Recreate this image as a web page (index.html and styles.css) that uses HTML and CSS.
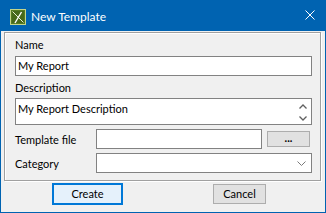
FILE: index.html
```html
<!DOCTYPE html>
<html lang="en">
<head>
    <meta charset="UTF-8">
    <title>New Template</title>
    <link rel="stylesheet" href="styles.css">
</head>
<body>
    <div class="dialog">
        <div class="titlebar">
            <svg class="app-icon" width="16" height="16" viewBox="0 0 16 16">
                <rect x="0.5" y="0.5" width="15" height="15" fill="#557a22" stroke="#c3d48a"/>
                <rect x="2" y="2" width="12" height="12" fill="#47691a"/>
                <path d="M2.5 2.5 L13.5 13.5" stroke="#e8f0d0" stroke-width="1"/>
                <path d="M11.5 3 L5 14" stroke="#ffffff" stroke-width="1.4"/>
            </svg>
            <span class="title">New Template</span>
            <svg class="close" width="10" height="10" viewBox="0 0 10 10">
                <path d="M0.5 0.5 L9.5 9.5 M9.5 0.5 L0.5 9.5" stroke="#fff" stroke-width="1"/>
            </svg>
        </div>

        <div class="content">
            <div class="group">
                <div class="label name-label">Name</div>
                <div class="field">My Report</div>

                <div class="label desc-label">Description</div>
                <div class="field area">
                    <span class="area-text">My Report Description</span>
                    <div class="spin">
                        <svg width="8" height="5" viewBox="0 0 8 5"><path d="M0.5 4.5 L4 1 L7.5 4.5" fill="none" stroke="#606060" stroke-width="1.3"/></svg>
                        <svg width="8" height="5" viewBox="0 0 8 5"><path d="M0.5 0.5 L4 4 L7.5 0.5" fill="none" stroke="#606060" stroke-width="1.3"/></svg>
                    </div>
                </div>

                <div class="row">
                    <span class="row-label">Template file</span>
                    <div class="field file"></div>
                    <div class="btn browse">...</div>
                </div>

                <div class="row">
                    <span class="row-label">Category</span>
                    <div class="field combo">
                        <svg width="9" height="5" viewBox="0 0 9 5"><path d="M0.5 0.5 L4.5 4.5 L8.5 0.5" fill="none" stroke="#7a7a7a" stroke-width="1"/></svg>
                    </div>
                </div>
            </div>

            <div class="actions">
                <div class="btn primary">Create</div>
                <div class="btn cancel">Cancel</div>
            </div>
        </div>
    </div>
</body>
</html>
```

FILE: styles.css
```css
body {
    margin: 0;
    font-family: Lato, "Liberation Sans", sans-serif;
    font-size: 11px;
    color: #000;
}
.dialog {
    width: 326px;
    height: 213px;
    box-sizing: border-box;
    border: 1px solid #0063b1;
    border-top: 0;
    background: #f0f0f0;
}
.titlebar {
    height: 31px;
    background: #0063b1;
    display: flex;
    align-items: center;
    padding: 2px 0 0 9px;
    box-sizing: border-box;
}
.title {
    color: #fff;
    margin-left: 5px;
    font-size: 12px;
}
.close {
    margin-left: auto;
    margin-right: 10px;
    margin-top: -3px;
}
.content {
    padding: 1px 4px 0 3px;
}
.group {
    height: 149px;
    box-sizing: border-box;
    border: 1px solid #a0a0a0;
    box-shadow: inset 1px 1px 0 #fff, 1px 1px 0 #fff;
    padding: 4px 8px 0 10px;
}
.label {
    line-height: 15px;
}
.field {
    height: 20px;
    box-sizing: border-box;
    border: 1px solid #828282;
    background: #fff;
    padding: 0 2px;
    line-height: 18px;
}
.name-label {
    margin-bottom: 4px;
}
.desc-label {
    margin-top: 4px;
    margin-bottom: 3px;
}
.area {
    height: 27px;
    display: flex;
    justify-content: space-between;
    padding: 2px 4px 0 2px;
    line-height: 15px;
}
.spin {
    display: flex;
    flex-direction: column;
    justify-content: space-between;
    padding: 3px 0 3px;
}
.spin svg {
    display: block;
}
.row {
    display: flex;
    align-items: center;
    margin-top: 4px;
}
.row-label {
    width: 81px;
    flex: none;
}
.file {
    width: 166px;
}
.combo {
    flex: 1;
    display: flex;
    align-items: center;
    justify-content: flex-end;
    padding-right: 5px;
}
.combo svg {
    margin-top: 1px;
}
.btn {
    box-sizing: border-box;
    background: #e1e1e1;
    border: 1px solid #adadad;
    text-align: center;
}
.browse {
    width: 43px;
    height: 16px;
    margin-left: 5px;
    line-height: 11px;
    font-weight: bold;
}
.actions {
    display: flex;
    align-items: center;
    padding: 2px 0 0 48px;
}
.primary {
    width: 71px;
    height: 22px;
    border: 2px solid #0078d7;
    background: #e5f1fb;
    line-height: 18px;
}
.cancel {
    width: 53px;
    height: 20px;
    margin-left: 90px;
    line-height: 18px;
}
```
